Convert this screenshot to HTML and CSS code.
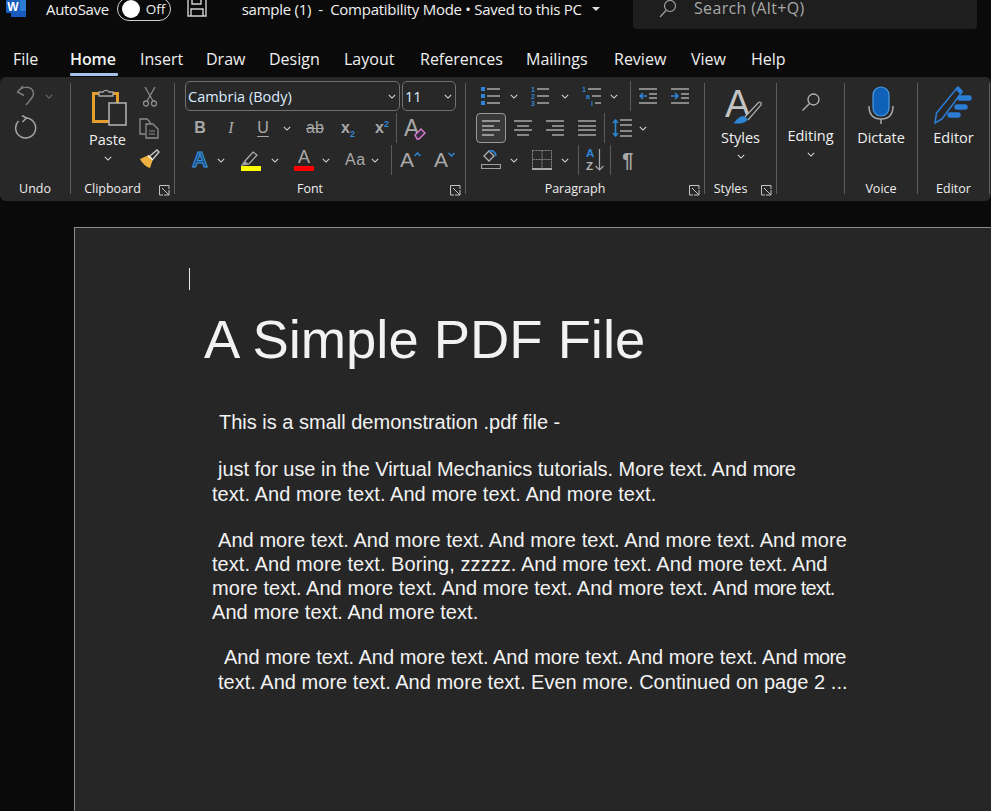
FILE: index.html
```html
<!DOCTYPE html>
<html lang="en">
<head>
<meta charset="utf-8">
<title>sample (1) - Word</title>
<link rel="stylesheet" href="styles.css">
</head>
<body>
<svg class="defs" width="0" height="0" aria-hidden="true">
  <symbol id="chev" viewBox="0 0 10 6"><path d="M1 1l4 4 4-4" fill="none" stroke="currentColor" stroke-width="1.3"/></symbol>
  <symbol id="launch" viewBox="0 0 11 11"><path d="M10 4V.5H.5V10H4M3 3l7 7M5 10h5V5" fill="none" stroke="#c4c4c4" stroke-width="1"/></symbol>
</svg>
<header class="titlebar">
  <svg class="word-logo" width="21" height="20" viewBox="0 0 21 20"><rect x="5" y="-2" width="15" height="20" rx="1" fill="#2b7cd3"/><rect x="5" y="12" width="15" height="6" fill="#185abd"/><rect y="0" x="0" width="14" height="14" rx="1" fill="#1a5dbf"/><text x="7" y="11.500" class="logo-w">W</text></svg>
  <span class="autosave">AutoSave</span>
  <span class="toggle"><span class="knob"></span><span class="off">Off</span></span>
  <svg class="save" width="20" height="20" viewBox="0 0 20 20"><path d="M1 -2H16L19 1V18H1ZM5 -2V6H14V-2M4 18V11H16V18" fill="none" stroke="#d0d0d0" stroke-width="1.4"/></svg>
  <span class="doc-title">sample (1)&nbsp; -&nbsp; Compatibility Mode • Saved to this PC</span>
  <span class="caret"></span>
  <div class="search">
    <svg width="20" height="20" viewBox="0 0 20 20"><circle cx="12" cy="7" r="5.500" fill="none" stroke="#a0a0a0" stroke-width="1.200"/><path d="M8 11.500L2 18" stroke="#a0a0a0" stroke-width="1.200"/></svg>
    <span>Search (Alt+Q)</span>
  </div>
</header>
<nav class="tabs">
  <span class="tab t-file">File</span>
  <span class="tab t-home active">Home</span>
  <span class="tab t-insert">Insert</span>
  <span class="tab t-draw">Draw</span>
  <span class="tab t-design">Design</span>
  <span class="tab t-layout">Layout</span>
  <span class="tab t-refs">References</span>
  <span class="tab t-mail">Mailings</span>
  <span class="tab t-review">Review</span>
  <span class="tab t-view">View</span>
  <span class="tab t-help">Help</span>
</nav>
<section class="ribbon">
  <div class="group g-undo">
    <div class="g-body undo-body">
      <div class="undo-row">
        <svg width="20" height="22" viewBox="0 0 20 22"><path d="M7 1L1.500 7L8 10.500M1.500 7C6 1 14 1 17 6C19 10 15 14 10 20" fill="none" stroke="#7d7d7d" stroke-width="1.500"/></svg>
        <svg class="chev dim" width="8" height="5"><use href="#chev"/></svg>
      </div>
      <svg class="redo" width="24" height="24" viewBox="0 0 24 24"><path d="M12 3A10 10 0 1 1 4.500 6M8 .5L12.500 3L8.500 7" fill="none" stroke="#a6a6a6" stroke-width="1.500"/></svg>
    </div>
    <div class="g-label">Undo</div>
  </div>
  <div class="group g-clip">
    <div class="g-body clip-body">
      <div class="paste">
        <svg width="36" height="40" viewBox="0 0 36 40"><path d="M2.500 6.500h24v28h-24z" fill="none" stroke="#e59d2e" stroke-width="3"/><path d="M8 9V5h4a3.500 3.500 0 0 1 6 0h4v4z" fill="#282828" stroke="#a8a8a8" stroke-width="1.300"/><rect x="18" y="16" width="17" height="22" fill="#282828" stroke="#b5b5b5" stroke-width="1.500"/></svg>
        <span class="paste-label">Paste</span>
        <svg class="chev" width="8" height="5"><use href="#chev"/></svg>
      </div>
      <div class="clip-tools">
        <svg width="16" height="22" viewBox="0 0 16 22"><path d="M3 1l8 14M13 1L5 15" stroke="#8c8c8c" stroke-width="1.300"/><circle cx="4" cy="17.500" r="2.500" fill="none" stroke="#8c8c8c" stroke-width="1.300"/><circle cx="12" cy="17.500" r="2.500" fill="none" stroke="#8c8c8c" stroke-width="1.300"/></svg>
        <svg width="21" height="21" viewBox="0 0 21 21"><path d="M6 16H1V1h7l3 3v2M7 6h7l5 5v9H7z" fill="none" stroke="#8c8c8c" stroke-width="1.300"/><path d="M10 13h6M10 16h6" stroke="#8c8c8c"/></svg>
        <svg width="21" height="20" viewBox="0 0 21 20"><path d="M1 10L10 6L14 10L11 19C7 18 3 14 1 10z" fill="#f0b040"/><path d="M9 6.500l5 4.500" stroke="#fff" stroke-width="1.200"/><path d="M11 7l7-6 2 2-6 7" fill="none" stroke="#c9c9c9" stroke-width="1.400"/></svg>
      </div>
    </div>
    <div class="g-label with-launch">Clipboard<svg class="launch" width="11" height="11"><use href="#launch"/></svg></div>
  </div>
  <div class="group g-font">
    <div class="g-body rows">
      <div class="combos">
        <div class="combo c-name"><span>Cambria (Body)</span><svg class="chev" width="8" height="5"><use href="#chev"/></svg></div>
        <div class="combo c-size"><span>11</span><svg class="chev" width="8" height="5"><use href="#chev"/></svg></div>
      </div>
      <div class="tool-row pad-15">
        <span class="glyph w20 g-b">B</span>
        <span class="glyph w20 ml11 g-i">I</span>
        <span class="glyph w20 ml12 g-u">U</span>
        <svg class="chev ml10" width="8" height="5"><use href="#chev"/></svg>
        <span class="glyph w24 ml12 g-s">ab</span>
        <span class="glyph w22 ml10 g-x">x<sub>2</sub></span>
        <span class="glyph w22 ml12 g-x">x<sup>2</sup></span>
        <i class="vsep ml3"></i>
        <span class="glyph w24 ml7 g-clear">A<svg width="12" height="12" viewBox="0 0 12 12"><path d="M1 7l6-6 4 4-6 6H3z" fill="#3b2b3f" stroke="#d47fd4" stroke-width="1.400"/></svg></span>
      </div>
      <div class="tool-row pad-11">
        <span class="glyph w28 g-texteff">A</span>
        <svg class="chev ml3" width="8" height="5"><use href="#chev"/></svg>
        <span class="swatch-ic ml16"><svg width="20" height="15" viewBox="0 0 20 15"><path d="M1 14l3-4 8-9 4 3-8 9z" fill="none" stroke="#b0b0b0" stroke-width="1.200"/><path d="M1 14l3-4 4 3z" fill="#9a9a9a"/></svg><i class="bar yellow"></i></span>
        <svg class="chev ml10" width="8" height="5"><use href="#chev"/></svg>
        <span class="swatch-ic ml15"><span class="glyph g-fc">A</span><i class="bar red"></i></span>
        <svg class="chev ml8" width="8" height="5"><use href="#chev"/></svg>
        <span class="glyph w20 ml15 g-aa">Aa</span>
        <svg class="chev ml6" width="8" height="5"><use href="#chev"/></svg>
        <i class="vsep ml12"></i>
        <span class="glyph w24 ml5 g-grow">A<svg class="size-caret" width="7" height="5" viewBox="0 0 7 5"><path d="M.5 4l3-3 3 3" fill="none" stroke="#2f86d6" stroke-width="1.500"/></svg></span>
        <span class="glyph w24 ml10 g-grow">A<svg class="size-caret" width="7" height="5" viewBox="0 0 7 5"><path d="M.5 1l3 3 3-3" fill="none" stroke="#2f86d6" stroke-width="1.500"/></svg></span>
      </div>
    </div>
    <div class="g-label with-launch">Font<svg class="launch" width="11" height="11"><use href="#launch"/></svg></div>
  </div>
  <div class="group g-para">
    <div class="g-body rows">
      <div class="tool-row pad-15">
        <svg width="20" height="18" viewBox="0 0 20 18"><path d="M0 0h4v4H0zM0 7h4v4H0zM0 14h4v4H0z" fill="#2f86d6"/><path d="M6 2h13M6 9h13M6 16h13" stroke="#a8a8a8" stroke-width="1.400"/></svg>
        <svg class="chev ml9" width="8" height="5"><use href="#chev"/></svg>
        <svg class="ml13" width="20" height="20" viewBox="0 0 20 20"><text x="0" y="6" class="num">1</text><text x="0" y="13" class="num">2</text><text x="0" y="20" class="num">3</text><path d="M6 3h12M6 10h12M6 17h12" stroke="#a8a8a8" stroke-width="1.400"/></svg>
        <svg class="chev ml10" width="8" height="5"><use href="#chev"/></svg>
        <svg class="ml13" width="20" height="20" viewBox="0 0 20 20"><text x="0" y="6" class="num">1</text><text x="4" y="13" class="num">a</text><text x="9" y="20" class="num">i</text><path d="M6 3h13M10 10h9M13 17h6" stroke="#a8a8a8" stroke-width="1.400"/></svg>
        <svg class="chev ml8" width="8" height="5"><use href="#chev"/></svg>
        <i class="vsep ml12"></i>
        <svg class="ml8" width="18" height="16" viewBox="0 0 18 16"><path d="M0 1h18M10 6h8M10 10h8M0 15h18" stroke="#a8a8a8" stroke-width="1.400"/><path d="M8 8H1M4 5L1 8l3 3" fill="none" stroke="#2f86d6" stroke-width="1.500"/></svg>
        <svg class="ml14" width="18" height="16" viewBox="0 0 18 16"><path d="M0 1h18M10 6h8M10 10h8M0 15h18" stroke="#a8a8a8" stroke-width="1.400"/><path d="M0 8h7M4 5l3 3-3 3" fill="none" stroke="#2f86d6" stroke-width="1.500"/></svg>
      </div>
      <div class="tool-row pad-10">
        <span class="selected"><svg width="18" height="16" viewBox="0 0 18 16"><path d="M0 1h18M0 6h12M0 10h18M0 15h12" stroke="#b5b5b5" stroke-width="1.400"/></svg></span>
        <svg class="ml8" width="18" height="16" viewBox="0 0 18 16"><path d="M0 1h18M3 6h12M0 10h18M3 15h12" stroke="#a8a8a8" stroke-width="1.400"/></svg>
        <svg class="ml14" width="18" height="16" viewBox="0 0 18 16"><path d="M0 1h18M6 6h12M0 10h18M6 15h12" stroke="#a8a8a8" stroke-width="1.400"/></svg>
        <svg class="ml14" width="18" height="16" viewBox="0 0 18 16"><path d="M0 1h18M0 6h18M0 10h18M0 15h18" stroke="#a8a8a8" stroke-width="1.400"/></svg>
        <i class="vsep ml8"></i>
        <svg class="ml7" width="20" height="18" viewBox="0 0 20 18"><path d="M8 1h12M8 6h12M8 12h12M8 17h12" stroke="#a8a8a8" stroke-width="1.400"/><path d="M3.500 1v16M1 4l2.500-3L6 4M1 14l2.500 3L6 14" fill="none" stroke="#2f86d6" stroke-width="1.500"/></svg>
        <svg class="chev ml7" width="8" height="5"><use href="#chev"/></svg>
      </div>
      <div class="tool-row pad-15">
        <svg width="20" height="20" viewBox="0 0 20 20"><path d="M8 1l5 5-5 5-5-5z" fill="none" stroke="#b0b0b0" stroke-width="1.300"/><path d="M8 1c3-1 6 0 7 5" fill="none" stroke="#2f86d6" stroke-width="1.600"/><path d="M.5 14.500h19v4H.5z" fill="none" stroke="#a0a0a0" stroke-width="1.200"/></svg>
        <svg class="chev ml9" width="8" height="5"><use href="#chev"/></svg>
        <svg class="ml14" width="20" height="20" viewBox="0 0 20 20"><path d="M.5.5h19v18M.5.5v18M10 .5v18M.5 9.500h19" fill="none" stroke="#8c8c8c" stroke-width="1" stroke-dasharray="2 1"/><path d="M0 19h20" stroke="#c9c9c9" stroke-width="1.600"/></svg>
        <svg class="chev ml9" width="8" height="5"><use href="#chev"/></svg>
        <i class="vsep ml9"></i>
        <span class="sort ml7"><span class="sort-letters"><b>A</b><b class="z">Z</b></span><svg width="9" height="22" viewBox="0 0 9 22"><path d="M4.500 0v21M.5 17l4 4 4-4" fill="none" stroke="#a8a8a8" stroke-width="1.200"/></svg></span>
        <i class="vsep ml6"></i>
        <span class="glyph ml11 g-pil">¶</span>
      </div>
    </div>
    <div class="g-label with-launch">Paragraph<svg class="launch" width="11" height="11"><use href="#launch"/></svg></div>
  </div>
  <div class="group g-styles">
    <div class="g-body big">
      <svg class="big-ic" width="42" height="40" viewBox="0 0 42 40"><text x="5" y="31" class="big-a">A</text><path d="M24 32L38 17c2-2 4 0 3 2L28 34" fill="#282828" stroke="#a8a8a8" stroke-width="1.300"/><path d="M13 37c3-1 4-6 10-7l5 3c-3 5-9 5-15 4z" fill="#2f86d6"/></svg>
      <span class="big-label">Styles</span>
      <svg class="chev low" width="8" height="5"><use href="#chev"/></svg>
    </div>
    <div class="g-label with-launch">Styles<svg class="launch" width="11" height="11"><use href="#launch"/></svg></div>
  </div>
  <div class="group g-edit">
    <div class="g-body big edit-body">
      <svg class="big-ic" width="20" height="20" viewBox="0 0 20 20"><circle cx="12.500" cy="7.500" r="5.500" fill="none" stroke="#b5b5b5" stroke-width="1.300"/><path d="M8.500 11.500L1.500 18.500" stroke="#b5b5b5" stroke-width="1.300"/></svg>
      <span class="big-label">Editing</span>
      <svg class="chev low" width="8" height="5"><use href="#chev"/></svg>
    </div>
    <div class="g-label"></div>
  </div>
  <div class="group g-voice">
    <div class="g-body big">
      <svg class="big-ic" width="26" height="40" viewBox="0 0 26 40"><rect x="5" y="1" width="16" height="29" rx="8" fill="#0f62b8" stroke="#4d9be6" stroke-width="1.200"/><path d="M1 20c0 9 5 13 12 13s12-4 12-13M13 33v5" fill="none" stroke="#a8a8a8" stroke-width="1.500"/></svg>
      <span class="big-label">Dictate</span>
    </div>
    <div class="g-label">Voice</div>
  </div>
  <div class="group g-editor">
    <div class="g-body big">
      <svg class="big-ic" width="40" height="40" viewBox="0 0 40 40"><path d="M1 37L2.500 27L23 2L28 6L8 33z" fill="#282828" stroke="#2b7cd3" stroke-width="1.600"/><path d="M21 3l3-3 5 5-3 3z" fill="#2b7cd3"/><path d="M26 12h9M23 21h8M16 29h8" stroke="#2b7cd3" stroke-width="5.500" stroke-linecap="round"/></svg>
      <span class="big-label">Editor</span>
    </div>
    <div class="g-label">Editor</div>
  </div>
</section>
<main class="workspace">
  <article class="page">
    <i class="cursor"></i>
    <h1>A Simple PDF File</h1>
    <p class="p1">This is a small demonstration .pdf file -</p>
    <p class="p2"><span class="ind">just for use in the Virtual Mechanics tutorials. More text. And <span class="tight">more</span></span><br>text. And more text. And more text. And more text.</p>
    <p class="p3"><span class="ind">And more text. And more text. And more text. And more text. And more</span><br>text. And more text. Boring, zzzzz. And more text. And more text. And<br>more text. And more text. And more text. And more text. And <span class="tight">more text.</span><br>And more text. And more text.</p>
    <p class="p4"><span class="ind">And more text. And more text. And more text. And more text. And <span class="tight">more</span></span><br>text. And more text. And more text. Even more. Continued on page 2 ...</p>
  </article>
</main>
</body>
</html>
```
FILE: styles.css
```css
* { box-sizing: border-box; }
html, body { margin: 0; height: 100%; overflow: hidden; }
body { background: #0a0a0a; color: #f0f0f0; font-family: "Open Sans", "Noto Sans", sans-serif; display: flex; flex-direction: column; }
.defs { position: absolute; }
svg { display: block; flex: none; }

.titlebar { display: flex; align-items: flex-start; height: 29px; font-size: 15px; line-height: 18px; padding-left: 6px; flex: none; }
.logo-w { font: bold 12px "Liberation Sans", sans-serif; fill: #fff; text-anchor: middle; }
.word-logo { margin-top: -1px; }
.autosave { margin-left: 19px; letter-spacing: -.35px; }
.toggle { display: flex; align-items: center; width: 54px; height: 24px; margin: -3px 0 0 8px; border: 1px solid #cfcfcf; border-radius: 12px; padding-left: 4px; flex: none; }
.knob { width: 18px; height: 18px; border-radius: 50%; background: #fff; }
.off { margin-left: 6px; font-size: 13.500px; }
.save { margin: -2px 0 0 16px; }
.doc-title { margin-left: 35px; white-space: pre; letter-spacing: -.27px; }
.caret { width: 0; height: 0; margin: 7px 0 0 10px; border: 4px solid transparent; border-top-color: #e0e0e0; border-bottom: 0; }
.search { position: absolute; left: 633px; top: 0; display: flex; align-items: flex-start; gap: 16px; width: 344px; height: 29px; padding-left: 25px; background: #1e1e1e; border-radius: 0 0 4px 4px; color: #a8a8a8; font-size: 16px; letter-spacing: .35px; line-height: 16px; }
.search svg { margin-top: -1px; }

.tabs { display: flex; height: 48px; flex: none; padding-left: 13px; font-size: 16px; line-height: 20px; padding-top: 20px; }
.tab { position: relative; }
.t-file { width: 57px; }
.t-home { width: 70px; font-weight: 600; letter-spacing: -.1px; }
.t-insert { width: 66px; }
.t-draw { width: 63px; }
.t-design { width: 75px; }
.t-layout { width: 76px; }
.t-refs { width: 106px; }
.t-mail { width: 88px; }
.t-review { width: 77px; }
.t-view { width: 60px; }
.active::after { content: ""; position: absolute; left: 0; width: 48px; top: 24px; height: 3px; background: #a9c4ea; border-radius: 1px; }

.ribbon { display: flex; height: 124px; flex: none; background: #282828; border-radius: 6px; padding: 6px 0 7px; }
.group { display: flex; flex-direction: column; flex: none; border-right: 1px solid #5c5c5c; }
.g-undo { width: 71px; }
.g-clip { width: 104px; }
.g-font { width: 291px; }
.g-para { width: 239px; }
.g-styles { width: 72px; }
.g-edit { width: 68px; }
.g-voice { width: 73px; }
.g-editor { width: 72px; }
.g-body { flex: 1; min-height: 0; }
.g-label { position: relative; height: 20px; margin-bottom: -5px; line-height: 20px; text-align: center; font-size: 12.500px; color: #eee; flex: none; }
.with-launch { padding-right: 20px; }
.launch { position: absolute; right: 4px; top: 6px; }
.chev { color: #d8d8d8; }
.dim { color: #6f6f6f; }

.undo-body { padding: 2px 0 0 16px; }
.undo-row { display: flex; align-items: center; gap: 9px; height: 22px; }
.redo { margin: 8px 0 0 -2px; }

.clip-body { display: flex; padding: 4px 0 0 20px; }
.paste { display: flex; flex-direction: column; align-items: center; width: 33px; font-size: 14.500px; }
.paste svg:first-child { margin-left: 2px; }
.paste-label { margin-top: 3px; line-height: 20px; }
.paste .chev { margin-top: 6px; }
.clip-tools { display: flex; flex-direction: column; align-items: center; gap: 11px; margin-left: 9px; width: 33px; }
.clip-tools svg { margin-top: -1px; }

.rows { display: grid; grid-auto-rows: 32px; margin-top: -3px; }
.combos { display: flex; gap: 2px; padding: 1px 0 0 10px; }
.combo { display: flex; align-items: center; justify-content: space-between; height: 30px; border: 1px solid #707070; border-radius: 5px; padding: 0 3px 0 2px; font-size: 14.500px; color: #dcecff; }
.c-name { width: 215px; }
.c-size { width: 54px; }
.tool-row { display: flex; align-items: center; }
.pad-10 { padding-left: 10px; }
.pad-11 { padding-left: 11px; }
.pad-15 { padding-left: 15px; }
.w20 { width: 20px; }
.w22 { width: 22px; }
.w24 { width: 24px; }
.w28 { width: 28px; }
.ml3 { margin-left: 3px; }
.ml5 { margin-left: 5px; }
.ml6 { margin-left: 6px; }
.ml7 { margin-left: 7px; }
.ml8 { margin-left: 8px; }
.ml9 { margin-left: 9px; }
.ml10 { margin-left: 10px; }
.ml11 { margin-left: 11px; }
.ml12 { margin-left: 12px; }
.ml13 { margin-left: 13px; }
.ml14 { margin-left: 14px; }
.ml15 { margin-left: 15px; }
.ml16 { margin-left: 16px; }
.vsep { display: block; width: 1px; height: 30px; flex: none; background: #5c5c5c; }
.glyph { display: block; flex: none; text-align: center; font-family: "Liberation Sans", sans-serif; color: #a8a8a8; font-size: 16px; line-height: 20px; white-space: nowrap; }
.g-b { font-weight: bold; }
.g-i { font-style: italic; font-family: "Liberation Serif", serif; }
.g-u { text-decoration: underline; text-underline-offset: 3px; }
.g-s { text-decoration: line-through; }
.g-x { font-weight: bold; }
.g-x sub, .g-x sup { font-size: 9px; color: #2f86d6; line-height: 0; }
.g-clear { position: relative; font-size: 23px; text-align: left; }
.g-clear svg { position: absolute; left: 10px; top: 10px; }
.g-texteff { font-size: 22px; font-weight: bold; color: #1c4f85; -webkit-text-stroke: 1px #3a96e0; }
.swatch-ic { display: flex; flex-direction: column; align-items: center; width: 20px; height: 22px; justify-content: flex-end; flex: none; }
.bar { display: block; width: 20px; height: 5px; flex: none; }
.yellow { background: #ffff00; }
.red { background: #ff0000; }
.g-fc { font-size: 18px; line-height: 17px; }
.g-aa { font-size: 16px; letter-spacing: .5px; }
.g-grow { position: relative; font-size: 21px; text-align: left; padding-left: 3px; }
.size-caret { position: absolute; left: 17px; top: 2px; }
.selected { display: flex; align-items: center; justify-content: center; width: 30px; height: 30px; flex: none; border: 1px solid #9a9a9a; border-radius: 4px; background: #383838; }
.num { font: bold 7px "Liberation Sans", sans-serif; fill: #2f86d6; }
.sort { display: flex; align-items: center; gap: 1px; flex: none; }
.sort-letters { display: flex; flex-direction: column; font: bold 11.500px/13px "Liberation Sans", sans-serif; color: #2f86d6; }
.sort-letters .z { color: #b5b5b5; }
.g-pil { font-size: 20px; font-weight: bold; }

.big { display: flex; flex-direction: column; align-items: center; font-size: 14.500px; padding-top: 3px; }
.big-a { font: 38px "Liberation Sans", sans-serif; fill: #c4c4c4; }
.big-ic { height: 40px; }
.big-label { line-height: 20px; margin-top: 2px; }
.low { margin-top: 6px; }
.edit-body .big-ic { height: 20px; margin-top: 6px; }
.edit-body .big-label { margin-top: 14px; }

.workspace { flex: 1; min-height: 0; padding: 26px 0 0 74px; }
.page { position: relative; height: 100%; background: #262626; border: solid #8c8c8c; border-width: 1px 0 0 1px; padding: 80px 0 0 129px; font-family: "Liberation Sans", Arial, sans-serif; color: #f2f2f2; font-size: 20px; line-height: 24px; white-space: nowrap; letter-spacing: .06px; }
.cursor { position: absolute; left: 114px; top: 40px; width: 1px; height: 22px; background: #e8e8e8; }
h1 { margin: 0 0 38px; font-size: 54.400px; line-height: 64px; font-weight: 400; letter-spacing: 0; }
.page p { margin: 0; }
.p1 { padding-left: 15px; letter-spacing: 0; }
.p2 { padding: 23px 0 0 8px; line-height: 25px; }
.p2 .ind { letter-spacing: -.03px; }
.p2 + .p3 { padding-top: 21px; }
.p3 { padding: 21px 0 0 8px; }
.p4 { padding: 21px 0 0 14px; line-height: 25px; letter-spacing: .02px; }
.p4 .ind { letter-spacing: 0; }
.ind { margin-left: 6px; }
.tight { letter-spacing: -.8px; }
```
